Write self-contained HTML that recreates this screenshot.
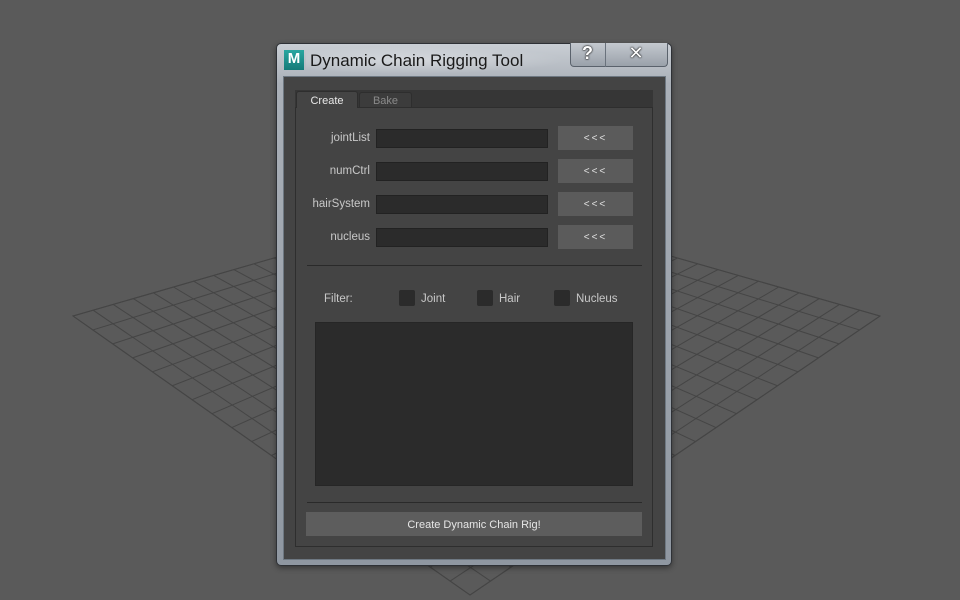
<!DOCTYPE html>
<html><head><meta charset="utf-8"><style>
body{margin:0;width:960px;height:600px;background:#5a5a5a;position:relative;overflow:hidden;font-family:"Liberation Sans","DejaVu Sans",sans-serif;}
.a{position:absolute;box-sizing:border-box}
.lbl{color:#c8c8c8;font-size:11.5px;text-align:right;width:80px;left:290px}
.inp{background:#2b2b2b;border:1px solid #222;left:376px;width:172px;height:19px}
.btn{background:#5b5b5b;left:558px;width:75px;height:24px;color:#e0e0e0;font-size:10px;text-align:center;line-height:26px;letter-spacing:2px}
.cb{background:#2b2b2b;width:16px;height:16px;border-radius:2px;top:290px}
.ct{color:#c8c8c8;font-size:11.5px;top:293px}
</style></head><body>
<svg id="g" class="a" style="left:0;top:0" width="960" height="600"><polygon points="73,316 475,200 880,316 470,595" fill="none" stroke="#424242"/></svg>
<script>
(function(){var s=document.getElementById('g'),L=[73,316],T=[475,200],R=[880,316],B=[470,595],n=20,h='';
function ln(a,b){h+='<line x1="'+a[0]+'" y1="'+a[1]+'" x2="'+b[0]+'" y2="'+b[1]+'" stroke="#454545" stroke-width="1"/>';}
function lp(p,q,t){return[p[0]+(q[0]-p[0])*t,p[1]+(q[1]-p[1])*t];}
for(var i=0;i<=n;i++){var t=i/n;ln(lp(L,B,t),lp(T,R,t));ln(lp(L,T,t),lp(B,R,t));}
s.innerHTML+=h;})();
</script>
<div class="a" style="left:276px;top:43px;width:396px;height:523px;border-radius:5px;background:linear-gradient(180deg,#c9ced4 0,#aab0b8 40px,#8f97a1 100%);border:1px solid #2e3136;box-shadow:0 2px 6px rgba(0,0,0,.4)"></div>
<div class="a" style="left:306px;top:46px;width:260px;height:28px;background:radial-gradient(ellipse at 40% 50%,rgba(255,255,255,.35),rgba(255,255,255,0) 70%)"></div>
<div class="a" style="left:284px;top:50px;width:20px;height:20px;background:linear-gradient(#2aa6a0,#147a78);color:#fff;font-weight:bold;font-size:15px;text-align:center;line-height:18px">M</div>
<div class="a" style="left:310px;top:51px;font-size:17px;color:#1a1a1a">Dynamic Chain Rigging Tool</div>
<div class="a" style="left:570px;top:43px;width:98px;height:24px;border:1px solid #5a626c;border-top:none;border-radius:0 0 4px 4px;background:linear-gradient(#c4c9cf,#9aa1aa)"></div>
<div class="a" style="left:605px;top:43px;width:1px;height:24px;background:#6a727c"></div>
<div class="a" style="left:570px;top:43px;width:35px;text-align:center;font-size:18px;font-weight:bold;color:#fff;text-shadow:0 0 2px #000,0 0 1px #000">?</div>
<div class="a" style="left:606px;top:43px;width:60px;text-align:center;font-size:18px;font-weight:bold;color:#fff;text-shadow:0 0 2px #000,0 0 1px #000">✕</div>
<div class="a" style="left:283px;top:76px;width:383px;height:484px;background:#444;border:1px solid #6e7882"></div>
<div class="a" style="left:295px;top:90px;width:358px;height:18px;background:#363636"></div>
<div class="a" style="left:296px;top:91px;width:62px;height:17px;background:#444;border:1px solid #2e2e2e;border-bottom:none;border-radius:3px 3px 0 0;color:#e8e8e8;font-size:11px;text-align:center;line-height:19px">Create</div>
<div class="a" style="left:359px;top:92px;width:53px;height:16px;background:#3c3c3c;border:1px solid #2e2e2e;border-bottom:none;border-radius:3px 3px 0 0;color:#8a8a8a;font-size:11px;text-align:center;line-height:16px">Bake</div>
<div class="a" style="left:295px;top:107px;width:358px;height:440px;border:1px solid #2e2e2e;border-top:none"></div>
<div class="a" style="left:358px;top:107px;width:295px;height:1px;background:#2e2e2e"></div>
<div class="a lbl" style="top:132px">jointList</div><div class="a inp" style="top:129px"></div><div class="a btn" style="top:126px">&lt;&lt;&lt;</div>
<div class="a lbl" style="top:165px">numCtrl</div><div class="a inp" style="top:162px"></div><div class="a btn" style="top:159px">&lt;&lt;&lt;</div>
<div class="a lbl" style="top:198px">hairSystem</div><div class="a inp" style="top:195px"></div><div class="a btn" style="top:192px">&lt;&lt;&lt;</div>
<div class="a lbl" style="top:231px">nucleus</div><div class="a inp" style="top:228px"></div><div class="a btn" style="top:225px">&lt;&lt;&lt;</div>
<div class="a" style="left:307px;top:265px;width:335px;height:1px;background:#2a2a2a"></div>
<div class="a ct" style="left:324px">Filter:</div>
<div class="a cb" style="left:399px"></div><div class="a ct" style="left:421px">Joint</div>
<div class="a cb" style="left:477px"></div><div class="a ct" style="left:499px">Hair</div>
<div class="a cb" style="left:554px"></div><div class="a ct" style="left:576px">Nucleus</div>
<div class="a" style="left:315px;top:322px;width:318px;height:164px;background:#2b2b2b;border:1px solid #262626"></div>
<div class="a" style="left:307px;top:502px;width:335px;height:1px;background:#2a2a2a"></div>
<div class="a" style="left:306px;top:512px;width:336px;height:24px;background:#5d5d5d;color:#e6e6e6;font-size:11px;text-align:center;line-height:26px">Create Dynamic Chain Rig!</div>
</body></html>
